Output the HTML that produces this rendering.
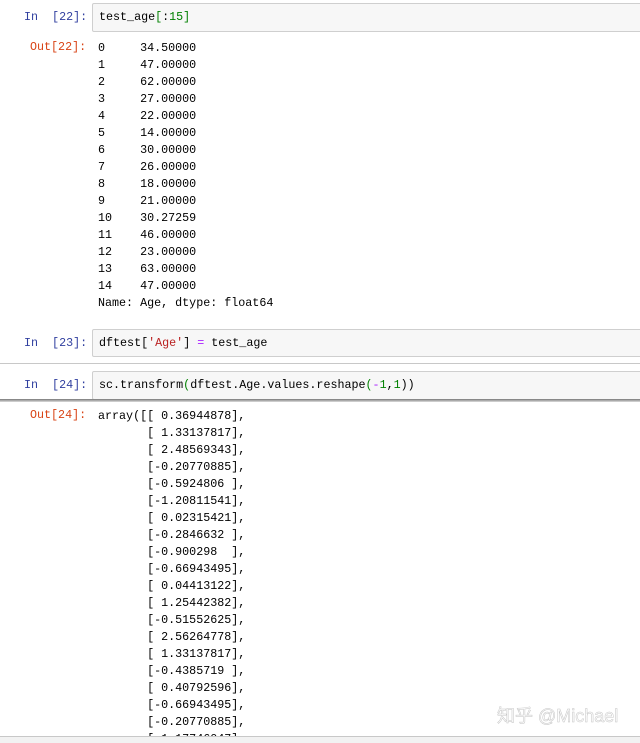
<!DOCTYPE html>
<html><head><meta charset="utf-8"><style>
body{margin:0;width:640px;height:742px;background:#fff;position:relative;overflow:hidden;font-family:"Liberation Mono","Noto Sans CJK SC",monospace;font-size:11.7px;color:#000}
.l{position:absolute;white-space:pre;line-height:17px;height:17px}
.in{color:#303f9f}.out{color:#d84315}
.box{position:absolute;left:92px;right:-2px;background:#f7f7f7;border:1px solid #cfcfcf;border-radius:2px}
.g{color:#408080}.s{color:#ba2121}.p{color:#aa22ff}.n{color:#008000}
</style></head><body>
<div class="box" style="top:3px;height:27px"></div>
<div class="l in" style="left:24px;top:9px">In  [22]:</div>
<div class="l" style="left:99px;top:9px">test_age<span class="n">[</span>:<span class="n">15]</span></div>
<div class="l out" style="left:30px;top:39px">Out[22]:</div>
<div class="l" style="left:98px;top:40px">0     34.50000
1     47.00000
2     62.00000
3     27.00000
4     22.00000
5     14.00000
6     30.00000
7     26.00000
8     18.00000
9     21.00000
10    30.27259
11    46.00000
12    23.00000
13    63.00000
14    47.00000
Name: Age, dtype: float64</div>

<div class="box" style="top:329px;height:26px"></div>
<div class="l in" style="left:24px;top:335px">In  [23]:</div>
<div class="l" style="left:99px;top:335px">dftest[<span class="s">'Age'</span>] <span class="p">=</span> test_age</div>
<div style="position:absolute;left:0;right:0;top:363px;height:1px;background:#c8c8c8"></div>

<div class="box" style="top:371px;height:27px"></div>
<div style="position:absolute;left:0;right:0;top:399px;height:3px;background:linear-gradient(#777,#ddd)"></div>
<div class="l in" style="left:24px;top:377px">In  [24]:</div>
<div class="l" style="left:99px;top:377px">sc.transform<span class="n">(</span>dftest.Age.values.reshape<span class="n">(</span><span class="p">-</span><span class="n">1</span>,<span class="n">1</span>))</div>
<div class="l out" style="left:30px;top:407px">Out[24]:</div>
<div class="l" style="left:98px;top:408px;height:328px;overflow:hidden">array([[ 0.36944878],
       [ 1.33137817],
       [ 2.48569343],
       [-0.20770885],
       [-0.5924806 ],
       [-1.20811541],
       [ 0.02315421],
       [-0.2846632 ],
       [-0.900298  ],
       [-0.66943495],
       [ 0.04413122],
       [ 1.25442382],
       [-0.51552625],
       [ 2.56264778],
       [ 1.33137817],
       [-0.4385719 ],
       [ 0.40792596],
       [-0.66943495],
       [-0.20770885],
       [-1.17746047],</div>
<div class="l" style="left:497px;top:704px;font-family:'Liberation Sans','Noto Sans CJK SC',sans-serif;font-size:18px;line-height:24px;height:24px;color:#fff;-webkit-text-stroke:0.5px #c4c4c4">知乎 @Michael</div>
<div style="position:absolute;left:0;right:0;top:736px;height:6px;background:#f2f2f2;border-top:1px solid #c8c8c8"></div>
</body></html>
